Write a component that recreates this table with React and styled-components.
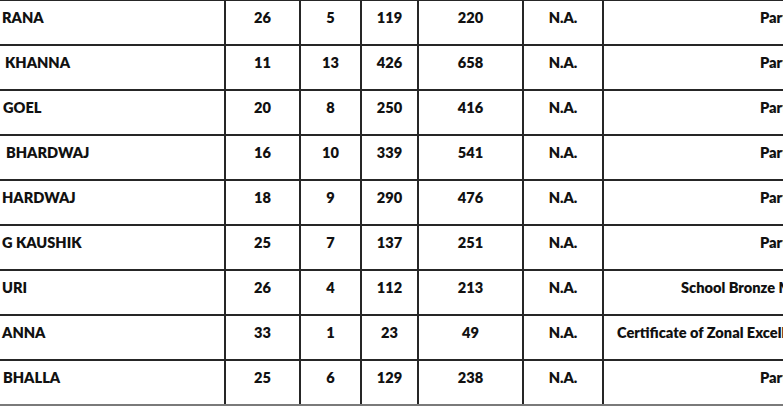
import React from "react";
import styled, { createGlobalStyle } from "styled-components";

const Global = createGlobalStyle`
  html, body { margin: 0; padding: 0; background: #fff; overflow: hidden; }
  body { width: 783px; height: 411px; }
`;

const Page = styled.div`
  width: 783px;
  height: 411px;
  overflow: hidden;
  background: #ffffff;
`;

const Table = styled.table`
  margin-left: -20px;
  margin-top: -1px;
  border-collapse: collapse;
  table-layout: fixed;
  width: 922px;
  font-family: Lato, "Open Sans", "Liberation Sans", sans-serif;
  font-weight: 800;
  font-size: 14.6px;
  color: #111;
`;

const Col = styled.col`
  width: ${(p) => p.$w}px;
`;

const Row = styled.tr`
  height: 45px;
  &:last-child td {
    border-bottom: 2px solid #7a7a7a;
  }
`;

const Cell = styled.td`
  border: 2px solid #262626;
  vertical-align: top;
  padding: 8px 0 0 0;
  line-height: 18px;
  text-align: center;
  white-space: nowrap;
  overflow: hidden;
`;

const NameCell = styled(Cell)`
  text-align: left;
  padding-left: ${(p) => 20 + p.$indent}px;
`;

const AwardCell = styled(Cell)`
  text-align: left;
  padding-left: ${(p) => p.$indent}px;
`;

const widths = [244, 75, 61, 57, 105, 80, 300];

const rows = [
  ["RANA", 0, "26", "5", "119", "220", "N.A.", "Participation", 156],
  ["KHANNA", 3, "11", "13", "426", "658", "N.A.", "Participation", 156],
  ["GOEL", 1, "20", "8", "250", "416", "N.A.", "Participation", 156],
  ["BHARDWAJ", 4, "16", "10", "339", "541", "N.A.", "Participation", 156],
  ["HARDWAJ", 0, "18", "9", "290", "476", "N.A.", "Participation", 156],
  ["G KAUSHIK", 0, "25", "7", "137", "251", "N.A.", "Participation", 156],
  ["URI", 0, "26", "4", "112", "213", "N.A.", "School Bronze Medal", 77],
  ["ANNA", 0, "33", "1", "23", "49", "N.A.", "Certificate of Zonal Excellence", 13],
  ["BHALLA", 1, "25", "6", "129", "238", "N.A.", "Participation", 156],
];

export default function App() {
  return (
    <Page>
      <Global />
      <Table>
        <colgroup>
          {widths.map((w, i) => (
            <Col key={i} $w={w} />
          ))}
        </colgroup>
        <tbody>
          {rows.map((r, i) => (
            <Row key={i}>
              <NameCell $indent={r[1]}>{r[0]}</NameCell>
              <Cell>{r[2]}</Cell>
              <Cell>{r[3]}</Cell>
              <Cell>{r[4]}</Cell>
              <Cell>{r[5]}</Cell>
              <Cell>{r[6]}</Cell>
              <AwardCell $indent={r[8]}>{r[7]}</AwardCell>
            </Row>
          ))}
        </tbody>
      </Table>
    </Page>
  );
}
